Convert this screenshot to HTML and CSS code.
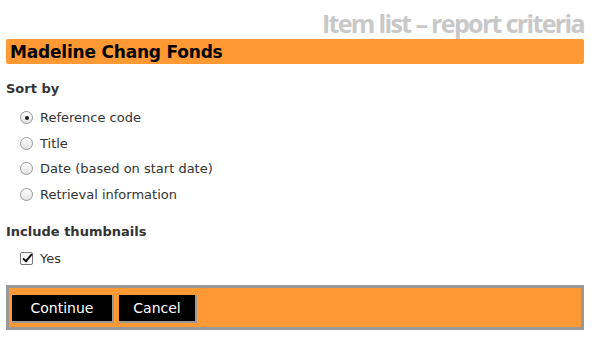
FILE: index.html
```html
<!DOCTYPE html>
<html>
<head>
<meta charset="utf-8">
<link rel="stylesheet" href="styles.css">
</head>
<body>
<div class="page">
  <h1 class="page-title">Item list – report criteria</h1>
  <h2 class="fonds">Madeline Chang Fonds</h2>
  <form class="criteria">
    <fieldset class="group">
      <div class="group-label">Sort by</div>
      <label class="option"><input type="radio" name="sort" checked> <span>Reference code</span></label>
      <label class="option"><input type="radio" name="sort"> <span>Title</span></label>
      <label class="option"><input type="radio" name="sort"> <span>Date (based on start date)</span></label>
      <label class="option"><input type="radio" name="sort"> <span>Retrieval information</span></label>
    </fieldset>
    <fieldset class="group">
      <div class="group-label">Include thumbnails</div>
      <label class="option"><input type="checkbox" checked> <span>Yes</span></label>
    </fieldset>
    <div class="actions">
      <button type="button" class="btn btn-continue">Continue</button>
      <button type="button" class="btn btn-cancel">Cancel</button>
    </div>
  </form>
</div>
</body>
</html>
```

FILE: styles.css
```css
html, body {
  margin: 0;
  padding: 0;
  background: #fff;
}
.page {
  padding: 0 16px 0 6px;
  font-family: "DejaVu Sans", Verdana, sans-serif;
  color: #333;
}
.page-title {
  margin: 0;
  padding-top: 5px;
  height: 33px;
  text-align: right;
  font-family: "Open Sans", sans-serif;
  font-weight: 700;
  font-size: 25px;
  letter-spacing: -1.65px;
  line-height: 36px;
  color: #c8c8c8;
  padding-right: 0;
}
.fonds {
  margin: 1px 0 0 0;
  height: 25px;
  padding: 0 4px;
  background: #ff9933;
  color: #000;
  font-size: 17px;
  font-weight: 700;
  line-height: 26px;
  letter-spacing: -0.2px;
  border-radius: 2px;
}
.criteria {
  margin: 0;
}
.group {
  margin: 0;
  padding: 0;
  border: 0;
  display: flex;
  flex-direction: column;
}
.group-label {
  font-weight: 700;
  font-size: 13px;
  color: #333;
  margin-top: 17px;
  margin-bottom: 8px;
  line-height: 16px;
}
.option {
  display: flex;
  align-items: center;
  height: 25.5px;
  padding-left: 14px;
  font-size: 13px;
  color: #333;
}
.option input {
  -webkit-appearance: none;
  appearance: none;
  margin: 0 7px 0 0;
  width: 13px;
  height: 13px;
  border: 1px solid #9a9a9a;
  background: linear-gradient(#ffffff, #e2e2e2);
  box-sizing: border-box;
  position: relative;
  flex: none;
}
.option input[type="radio"] {
  border-radius: 50%;
}
.option input[type="radio"]:checked::after {
  content: "";
  position: absolute;
  left: 3.5px;
  top: 3.5px;
  width: 4px;
  height: 4px;
  border-radius: 50%;
  background: #222;
}
.option input[type="checkbox"] {
  border-radius: 2px;
  border-color: #777;
  background: #fff;
}
.option input[type="checkbox"]:checked::after {
  content: "";
  position: absolute;
  left: 3.5px;
  top: -1px;
  width: 3px;
  height: 8px;
  border: solid #111;
  border-width: 0 2px 2px 0;
  transform: rotate(40deg);
}
.group + .group .group-label {
  margin-top: 17px;
  margin-bottom: 6px;
}
.actions {
  margin-top: 13px;
  border: 3px solid #999;
  background: #ff9933;
  height: 39px;
  display: flex;
  align-items: center;
  gap: 5px;
  padding-left: 3px;
}
.btn {
  font-family: "DejaVu Sans", Verdana, sans-serif;
  font-size: 14px;
  color: #fff;
  background: #000;
  border: 0;
  border-right: 2px solid #999;
  border-bottom: 2px solid #999;
  height: 28px;
  padding: 0 0;
  margin-top: 4px;
}
.btn-continue {
  width: 102px;
}
.btn-cancel {
  width: 78px;
}
```
